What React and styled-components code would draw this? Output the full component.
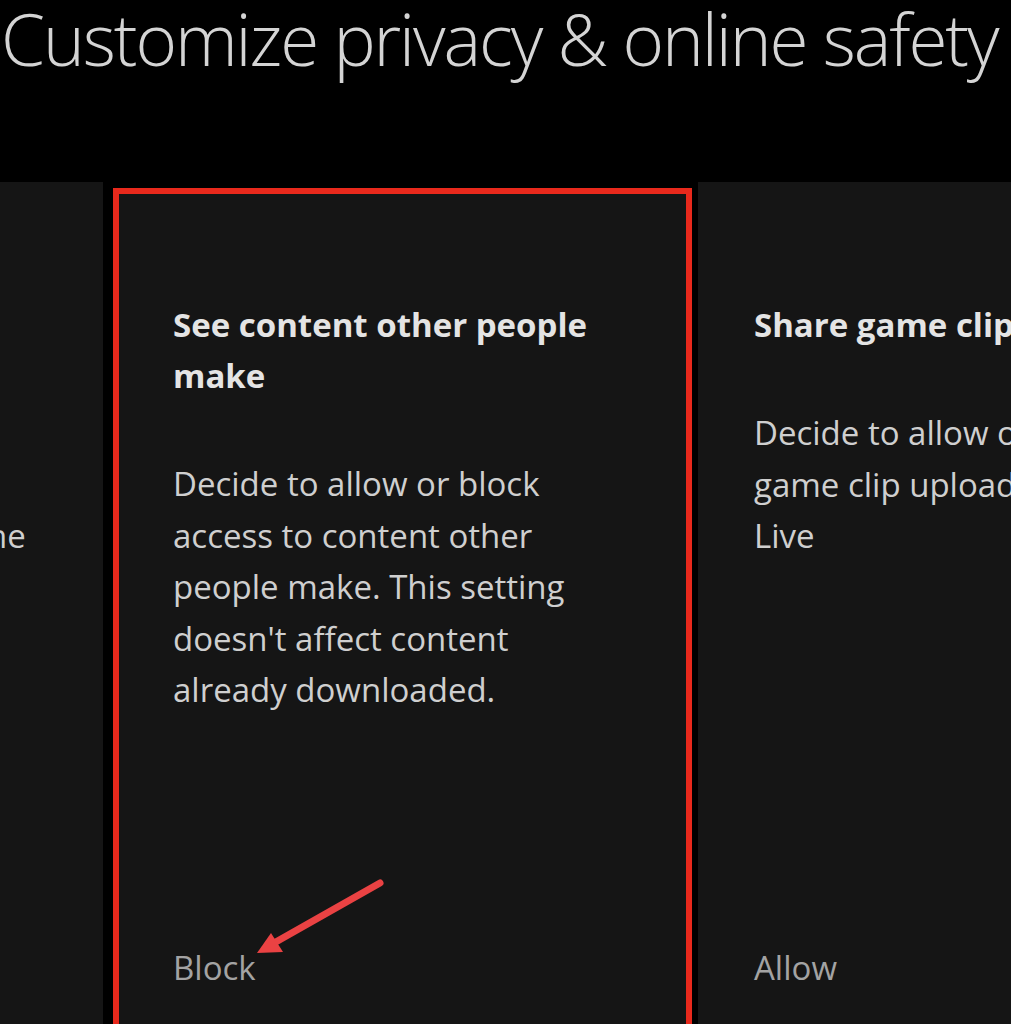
import React from "react";
import styled, { createGlobalStyle } from "styled-components";

const GlobalStyle = createGlobalStyle`
  html, body {
    margin: 0;
    padding: 0;
    background: #000;
  }
  body {
    font-family: "Open Sans", "Noto Sans", sans-serif;
    overflow: hidden;
  }
`;

const Page = styled.div`
  position: relative;
  width: 1011px;
  height: 1024px;
  overflow: hidden;
  background: #000;
`;

const Heading = styled.h1`
  margin: 0;
  padding: 0 0 0 1px;
  font-size: 71px;
  font-weight: 300;
  line-height: 77px;
  color: #d4d4d4;
  white-space: nowrap;
  letter-spacing: -2.1px;
`;

const Track = styled.div`
  display: flex;
  align-items: flex-start;
  margin-top: 105px;
  margin-left: -455px;
`;

const Card = styled.section`
  flex: none;
  box-sizing: border-box;
  display: flex;
  flex-direction: column;
  width: ${({ $width }) => $width}px;
  height: ${({ $focused }) => ($focused ? "874px" : "880px")};
  margin: ${({ $focused }) => ($focused ? "6px 6px 0 10px" : "0")};
  padding: ${({ $focused }) => ($focused ? "105px 80px 63px 54px" : "117px 100px 69px 56px")};
  background: #151515;
  border: ${({ $focused }) => ($focused ? "6px solid #e8291c" : "none")};
`;

const CardTitle = styled.h2`
  margin: 0;
  font-size: 33px;
  font-weight: 700;
  line-height: 51px;
  color: #e4e4e4;
`;

const CardText = styled.p`
  margin: 57px 0 0;
  font-size: 33px;
  font-weight: 400;
  line-height: 51.5px;
  color: #cfcfcf;
  white-space: ${({ $nowrap }) => ($nowrap ? "nowrap" : "normal")};
`;

const Value = styled.div`
  margin-top: auto;
  font-size: 33px;
  line-height: 51px;
  color: #a3a3a3;
`;

const Arrow = styled.svg`
  position: absolute;
  left: 240px;
  top: 870px;
  width: 160px;
  height: 100px;
  overflow: visible;
`;

const cards = [
  {
    title: "Voice & text",
    text: ["Decide who can talk", "with you on Xbox Live:", "everyone, friends or no one"],
    value: "Friends",
    width: 558,
  },
  {
    title: "See content other people make",
    text: "Decide to allow or block access to content other people make. This setting doesn't affect content already downloaded.",
    value: "Block",
    focused: true,
    width: 579,
  },
  {
    title: "Share game clips",
    text: "Decide to allow or block game clip uploads to Xbox Live",
    value: "Allow",
    width: 583,
  },
];

export default function App() {
  return (
    <Page>
      <GlobalStyle />
      <Heading>Customize privacy &amp; online safety</Heading>
      <Track>
        {cards.map((card) => {
          const lines = Array.isArray(card.text);
          return (
            <Card key={card.title} $focused={card.focused} $width={card.width}>
              <CardTitle>{card.title}</CardTitle>
              <CardText $nowrap={lines}>
                {lines
                  ? card.text.map((line, i) => (
                      <React.Fragment key={i}>
                        {line}
                        {i < card.text.length - 1 && <br />}
                      </React.Fragment>
                    ))
                  : card.text}
              </CardText>
              <Value>{card.value}</Value>
            </Card>
          );
        })}
      </Track>
      <Arrow viewBox="0 0 160 100">
        <line x1="140" y1="13" x2="34" y2="73" stroke="#ea4243" strokeWidth="7" strokeLinecap="round" />
        <polygon points="17,83 31,63 43,82" fill="#ea4243" />
      </Arrow>
    </Page>
  );
}
